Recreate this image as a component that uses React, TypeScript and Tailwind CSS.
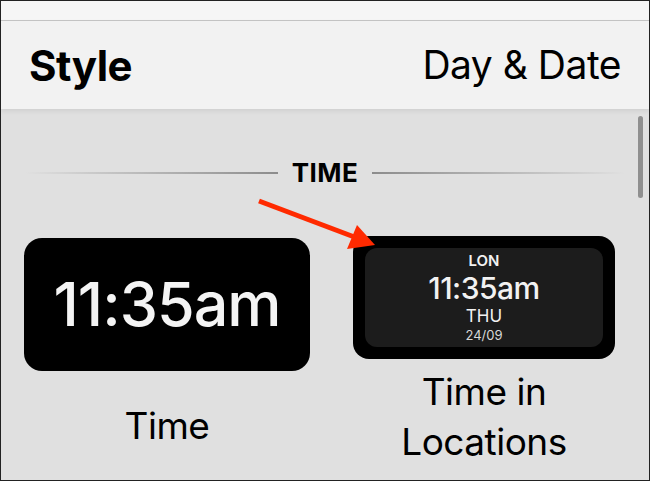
import React from "react";

const font = { fontFamily: "Inter, 'Noto Sans', sans-serif" };

function Divider({ label }: { label: string }) {
  return (
    <div className="flex items-center gap-[14px] px-[24px]">
      <div className="h-[2px] flex-1 bg-gradient-to-r from-transparent to-[#8c8c8c]" />
      <span className="text-[26px] font-bold leading-none tracking-[0.5px] text-black">{label}</span>
      <div className="h-[2px] flex-1 bg-gradient-to-l from-transparent to-[#8c8c8c]" />
    </div>
  );
}

function ArrowMark() {
  return (
    <svg className="absolute left-[250px] top-[192px] pointer-events-none" width="130" height="60" viewBox="0 0 130 60">
      <line x1="8" y1="8" x2="106" y2="45" stroke="#ff2a00" strokeWidth="5" />
      <polygon points="124,52 96,56 106,32" fill="#ff2a00" />
    </svg>
  );
}

export default function App() {
  return (
    <div className="relative w-[650px] h-[481px] overflow-hidden border border-[#222] bg-[#e0e0e0]" style={font}>
      {/* status strip */}
      <div className="h-[20px] bg-[#f6f6f6] border-b border-[#c6c6c6]" />

      {/* nav header */}
      <div className="relative z-10 flex h-[88px] items-center justify-between bg-[#f2f2f2] px-[28px] shadow-[0_2px_5px_rgba(0,0,0,0.08)]">
        <span className="text-[42px] font-bold tracking-[-0.5px] text-black">Style</span>
        <span className="text-[39px] font-normal tracking-[-0.5px] text-black">Day &amp; Date</span>
      </div>

      {/* scroll indicator */}
      <div className="absolute right-[6px] top-[115px] h-[82px] w-[5px] rounded-full bg-[#8f8f8f]" />

      <div className="pt-[51px]">
        <Divider label="TIME" />

        <div className="mt-[50px] flex items-start pl-[23px] gap-[43px]">
          <div className="flex w-[286px] flex-col items-center">
            <div className="mt-[2px] flex h-[133px] w-full items-center justify-center rounded-[18px] bg-black">
              <span className="text-[61px] font-medium leading-none tracking-[-1px] text-[#f4f4f4]">11:35am</span>
            </div>
            <div className="mt-[30px] text-[37px] leading-[50px] tracking-[-0.5px] text-black">Time</div>
          </div>

          <div className="flex w-[262px] flex-col items-center">
            <div className="h-[123px] w-full rounded-[16px] bg-black p-[12px]">
              <div className="flex h-full flex-col items-center justify-center rounded-[12px] bg-[#1c1c1c] text-[#f2f2f2]">
                <span className="text-[15px] font-semibold leading-[18px]">LON</span>
                <span className="text-[30px] font-medium leading-[36px] tracking-[-0.5px]">11:35am</span>
                <span className="text-[17px] leading-[21px]">THU</span>
                <span className="text-[13px] leading-[16px] text-[#d8d8d8]">24/09</span>
              </div>
            </div>
            <div className="mt-[8px] text-center text-[37px] leading-[50px] tracking-[-0.5px] text-black">
              Time in
              <br />
              Locations
            </div>
          </div>
        </div>
      </div>

      <ArrowMark />
    </div>
  );
}
